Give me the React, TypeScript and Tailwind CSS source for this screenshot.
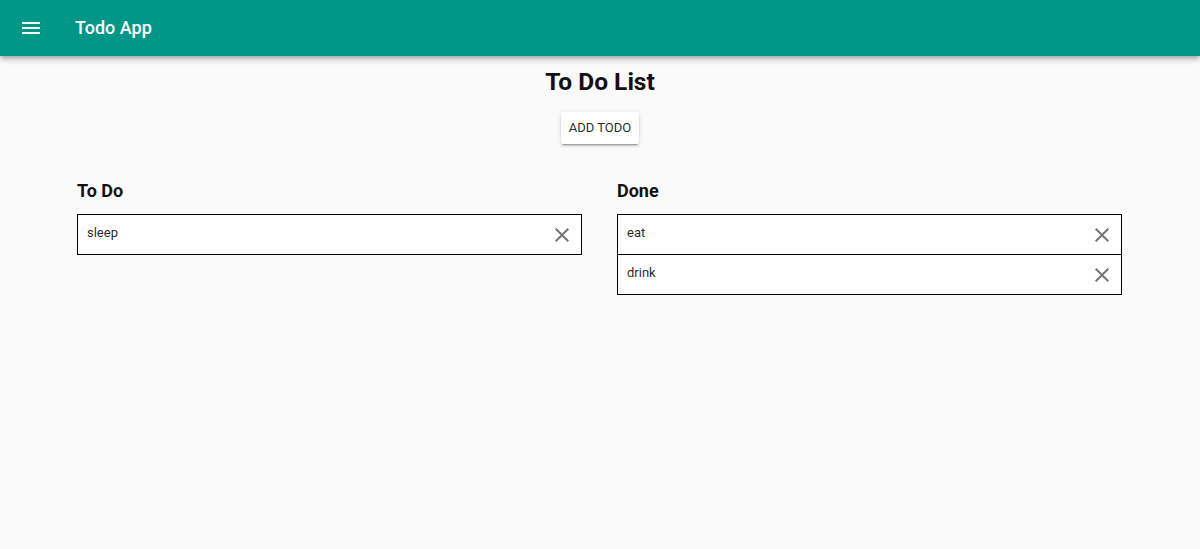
import React from "react";

const CloseIcon = () => (
  <svg viewBox="0 0 24 24" width="24" height="24" fill="rgba(0,0,0,0.54)">
    <path d="M19 6.41 17.59 5 12 10.59 6.41 5 5 6.41 10.59 12 5 17.59 6.41 19 12 13.41 17.59 19 19 17.59 13.41 12z" />
  </svg>
);

const MenuIcon = () => (
  <svg viewBox="0 0 24 24" width="24" height="24" fill="#fff">
    <path d="M3 18h18v-2H3zm0-5h18v-2H3zm0-7v2h18V6z" />
  </svg>
);

function Item({ text, first }: { text: string; first: boolean }) {
  return (
    <div
      className={`flex items-center justify-between h-[41px] bg-white border border-black pl-[9px] pr-[7px] ${
        first ? "" : "-mt-px"
      }`}
    >
      <span className="text-[13px] leading-[20px] -mt-[3px] text-[rgba(0,0,0,0.87)]">{text}</span>
      <CloseIcon />
    </div>
  );
}

function Column({ title, items }: { title: string; items: string[] }) {
  return (
    <div>
      <h2 className="text-[18px] font-bold leading-[27px] text-[#111]">{title}</h2>
      <div className="mt-[10px]">
        {items.map((t, i) => (
          <Item key={t} text={t} first={i === 0} />
        ))}
      </div>
    </div>
  );
}

export default function App() {
  return (
    <div
      className="min-h-[549px] bg-[#fafafa]"
      style={{ fontFamily: "Roboto, 'Noto Sans', sans-serif" }}
    >
      <header className="relative z-10 h-[56px] bg-[#009688] flex items-center pl-[19px] shadow-[0px_2px_4px_-1px_rgba(0,0,0,0.2),0px_4px_5px_0px_rgba(0,0,0,0.14),0px_1px_10px_0px_rgba(0,0,0,0.12)]">
        <MenuIcon />
        <span className="ml-[32px] text-[18px] font-medium text-white leading-[32px]">
          Todo App
        </span>
      </header>
      <div className="flex flex-col items-center">
        <h1 className="mt-[10px] text-[24.5px] font-bold leading-[32px] text-[#111]">
          To Do List
        </h1>
        <button className="mt-[14px] w-[78px] bg-white py-[5px] rounded-[2px] text-[13px] font-normal leading-[22px] text-[rgba(0,0,0,0.87)] shadow-[0px_3px_1px_-2px_rgba(0,0,0,0.2),0px_2px_2px_0px_rgba(0,0,0,0.14),0px_1px_5px_0px_rgba(0,0,0,0.12)]">
          ADD TODO
        </button>
      </div>
      <div className="grid grid-cols-2 gap-[35px] pl-[77px] mt-[33px] pr-[78px]">
        <Column title="To Do" items={["sleep"]} />
        <Column title="Done" items={["eat", "drink"]} />
      </div>
    </div>
  );
}
